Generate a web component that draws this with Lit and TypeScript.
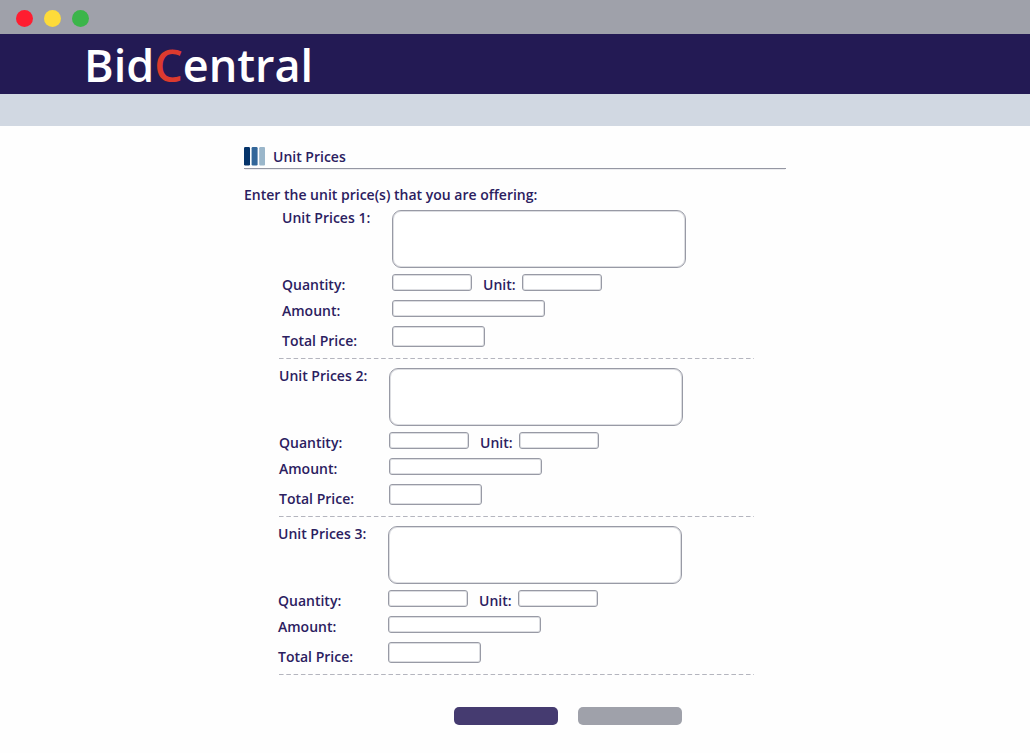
import { LitElement, html, css } from "lit";
import { customElement, property } from "lit/decorators.js";

@customElement("price-group")
class PriceGroup extends LitElement {
  @property({ type: Number }) number = 1;

  static styles = css`
    :host {
      display: block;
    }
    .grid {
      display: grid;
      grid-template-columns: 110px minmax(0, 1fr);
      row-gap: 9px;
    }
    .label {
      font-size: 14px;
      line-height: 20px;
    }
    .first {
      margin-top: -2px;
    }
    .row {
      display: flex;
      align-items: flex-start;
    }
    .low {
      padding-top: 5px;
      height: 16px;
    }
    .unit {
      margin: 0 6px 0 11px;
    }
    .fit {
      height: 17px;
    }
    .label.fit,
    .unit {
      line-height: 21px;
    }
    .field {
      box-sizing: border-box;
      display: block;
      min-width: 0;
      margin: 0;
      padding: 0 4px;
      height: 17px;
      border: 1px solid #989aa5;
      border-radius: 3px;
      box-shadow: inset 0 0 0 1px #dddee2;
      background: #fff;
      color: inherit;
      font: 600 12px "Open Sans", sans-serif;
      outline: none;
      resize: none;
    }
    .area {
      width: 294px;
      height: 58px;
      padding: 4px 8px;
      margin-bottom: -3px;
      border-radius: 9px;
    }
    .small {
      width: 80px;
    }
    .wide {
      width: 153px;
    }
    .total {
      width: 93px;
      height: 21px;
    }
  `;

  render() {
    return html`
      <div class="grid">
        <label class="label first" for="description">Unit Prices ${this.number}:</label>
        <textarea class="field area" id="description"></textarea>
        <label class="label fit" for="quantity">Quantity:</label>
        <div class="row fit">
          <input class="field small" id="quantity" type="text" />
          <label class="label unit" for="unit">Unit:</label>
          <input class="field small" id="unit" type="text" />
        </div>
        <label class="label fit" for="amount">Amount:</label>
        <input class="field wide" id="amount" type="text" />
        <label class="label low" for="total">Total Price:</label>
        <input class="field total" id="total" type="text" />
      </div>
    `;
  }
}

@customElement("app-root")
class AppRoot extends LitElement {
  static styles = css`
    :host {
      display: block;
      min-height: 100vh;
      background: #fefefe;
      color: #2b2060;
      font-family: "Open Sans", sans-serif;
      font-weight: 600;
    }
    .chrome {
      display: flex;
      align-items: center;
      gap: 11px;
      height: 34px;
      padding: 2px 16px 0;
      box-sizing: border-box;
      background: #9fa1aa;
    }
    .dot {
      width: 17px;
      height: 17px;
      border-radius: 50%;
    }
    .red {
      background: #ff1d30;
    }
    .yellow {
      background: #fddb3a;
    }
    .green {
      background: #3bb54a;
    }
    .brand {
      display: flex;
      align-items: center;
      height: 60px;
      padding: 2px 84px 0;
      box-sizing: border-box;
      background: #231a54;
    }
    .logo {
      color: #fff;
      font-size: 45px;
      line-height: 60px;
      text-decoration: none;
    }
    .accent {
      color: #dc3a2e;
    }
    .strip {
      height: 32px;
      background: #d1d8e2;
    }
    .main {
      width: 542px;
      max-width: 100%;
      margin: 0 auto;
      padding: 21px 0 28px;
    }
    .head {
      display: flex;
      align-items: flex-start;
      gap: 8px;
      height: 21px;
      border-bottom: 1px solid #9597a3;
      box-shadow: 0 1px 1px -1px #9597a3;
    }
    .mark {
      display: block;
      flex: none;
    }
    .title {
      margin: 0;
      font-size: 14px;
      line-height: 20px;
      font-weight: 600;
    }
    .intro {
      margin: 16px 0 5px;
      font-size: 14px;
      line-height: 20px;
    }
    .group {
      margin-left: 35px;
    }
    .group:first-of-type {
      margin-left: 38px;
    }
    .group:last-of-type {
      margin-left: 34px;
    }
    .rule {
      height: 1px;
      margin: 11px 32px 9px 35px;
      border: 0;
      background: linear-gradient(90deg, #b4b5be 58%, transparent 58%) 0 0 / calc(100% / 65) 100%;
    }
    .actions {
      display: flex;
      gap: 20px;
      margin: 32px 0 0 210px;
    }
    .button {
      width: 104px;
      height: 18px;
      padding: 0;
      border: 0;
      border-radius: 5px;
      background: #9fa1aa;
    }
    .primary {
      background: #453b70;
    }
  `;

  render() {
    return html`
      <div class="chrome">
        <span class="dot red"></span>
        <span class="dot yellow"></span>
        <span class="dot green"></span>
      </div>
      <header class="brand">
        <a class="logo" href="#">Bid<span class="accent">C</span>entral</a>
      </header>
      <div class="strip"></div>
      <main class="main">
        <div class="head">
          <svg class="mark" width="21" height="19" viewBox="0 0 21 19" aria-hidden="true">
            <rect x="0" y="0" width="6" height="18.5" rx="1.2" fill="#04336a" />
            <rect x="7.6" y="0" width="6" height="18.5" rx="1.2" fill="#336699" />
            <rect x="15.2" y="0" width="6" height="18.5" rx="1.2" fill="#9ab6ca" />
          </svg>
          <h1 class="title">Unit Prices</h1>
        </div>
        <p class="intro">Enter the unit price(s) that you are offering:</p>
        ${[1, 2, 3].map(
          (n) => html`
            <price-group class="group" .number=${n}></price-group>
            <hr class="rule" />
          `
        )}
        <div class="actions">
          <button class="button primary" type="button" aria-label="Submit"></button>
          <button class="button" type="button" aria-label="Cancel"></button>
        </div>
      </main>
    `;
  }
}
